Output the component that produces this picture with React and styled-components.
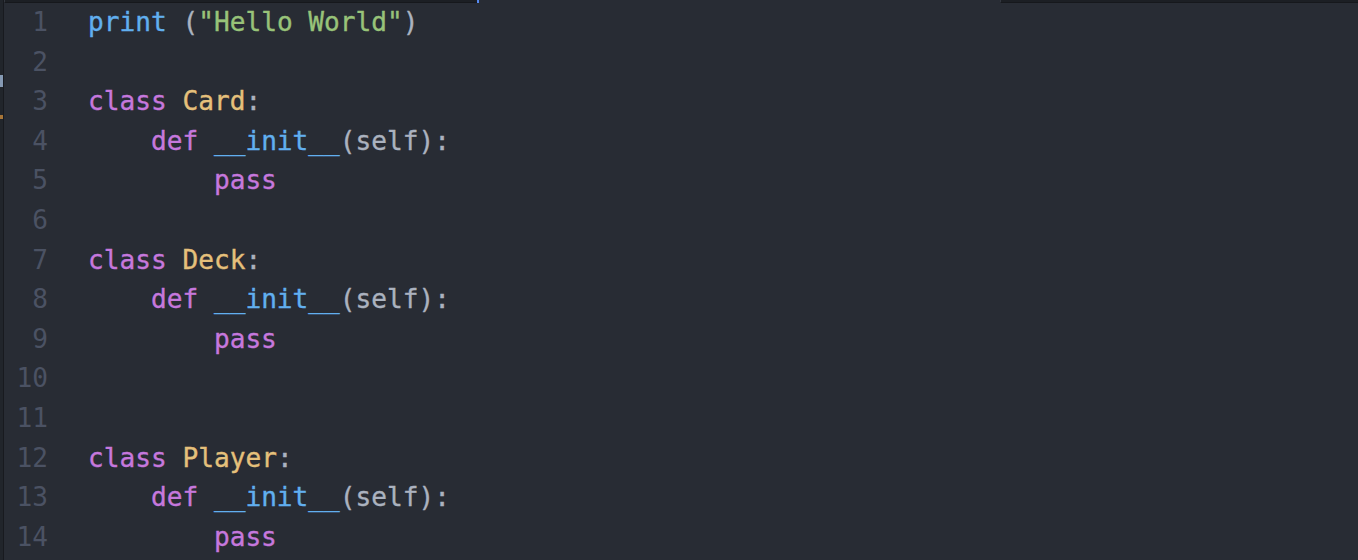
import styled, { createGlobalStyle } from "styled-components";

const GlobalStyle = createGlobalStyle`
  html, body {
    margin: 0;
    padding: 0;
    background: #282c34;
    overflow: hidden;
  }
`;

const lines = [
  [["fn", "print"], ["plain", " "], ["punc", "("], ["str", '"Hello World"'], ["punc", ")"]],
  [],
  [["kw", "class"], ["plain", " "], ["cls", "Card"], ["punc", ":"]],
  [["plain", "    "], ["kw", "def"], ["plain", " "], ["fn", "__init__"], ["punc", "(self):"]],
  [["plain", "        "], ["kw", "pass"]],
  [],
  [["kw", "class"], ["plain", " "], ["cls", "Deck"], ["punc", ":"]],
  [["plain", "    "], ["kw", "def"], ["plain", " "], ["fn", "__init__"], ["punc", "(self):"]],
  [["plain", "        "], ["kw", "pass"]],
  [],
  [],
  [["kw", "class"], ["plain", " "], ["cls", "Player"], ["punc", ":"]],
  [["plain", "    "], ["kw", "def"], ["plain", " "], ["fn", "__init__"], ["punc", "(self):"]],
  [["plain", "        "], ["kw", "pass"]],
];

const colors = {
  fn: "#61afef",
  str: "#98c379",
  kw: "#c678dd",
  cls: "#e5c07b",
  punc: "#abb2bf",
  plain: "#abb2bf",
};

function App() {
  return (
    <>
      <GlobalStyle />
      <Window>
        <Sidebar>
          <SideMark color="#9fb6d6" size={12} />
          <SideMark color="#c98a3c" size={4} />
        </Sidebar>
        <Main>
          <TabStrip>
            <Tab width="473px" />
            <Tab active width="523px" />
            <Tab />
          </TabStrip>
          <Editor>
            {lines.map((tokens, i) => (
              <Line key={i}>
                <LineNumber>{i + 1}</LineNumber>
                <Code>
                  {tokens.map(([kind, text], j) => (
                    <Token key={j} kind={kind}>
                      {text}
                    </Token>
                  ))}
                </Code>
              </Line>
            ))}
          </Editor>
        </Main>
      </Window>
    </>
  );
}

export default App;

const Window = styled.div`
  display: flex;
  width: 1358px;
  height: 560px;
  background: #282c34;
`;

const Sidebar = styled.div`
  width: 4px;
  flex-shrink: 0;
  background: #21252b;
  border-right: 1px solid #181a1f;
  box-sizing: border-box;
  display: flex;
  flex-direction: column;
  padding-top: 75px;
  gap: 28px;
`;

const SideMark = styled.div`
  width: 3px;
  height: ${(p) => p.size}px;
  background: ${(p) => p.color};
  opacity: 0.8;
`;

const Main = styled.div`
  flex: 1;
  display: flex;
  flex-direction: column;
`;

const TabStrip = styled.div`
  height: 3px;
  display: flex;
  flex-shrink: 0;
`;

const Tab = styled.div`
  width: ${(p) => p.width || "auto"};
  flex: ${(p) => (p.width ? "none" : "1")};
  background: ${(p) => (p.active ? "#282c34" : "#1c1f24")};
  border-bottom: ${(p) => (p.active ? "none" : "1px solid #16181c")};
  border-left: ${(p) => (p.active ? "2px solid #568af2" : "1px solid #33373f")};
  box-sizing: border-box;
`;

const Editor = styled.div`
  flex: 1;
  display: flex;
  flex-direction: column;
  font-family: "DejaVu Sans Mono", "Liberation Mono", monospace;
  font-size: 26.15px;
  line-height: 39.6px;
`;

const Line = styled.div`
  display: flex;
  height: 39.6px;
  white-space: pre;
`;

const LineNumber = styled.div`
  width: 44px;
  text-align: right;
  color: #4b5263;
  flex-shrink: 0;
  padding-right: 40px;
`;

const Code = styled.div`
  color: #abb2bf;
  -webkit-text-stroke: 0.35px currentColor;
`;

const Token = styled.span`
  color: ${(p) => colors[p.kind]};
`;
